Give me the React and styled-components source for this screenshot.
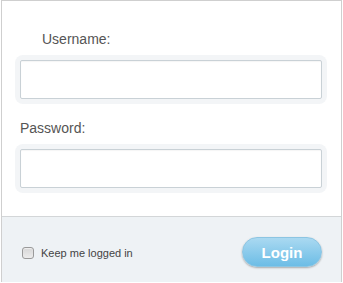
import styled, { createGlobalStyle } from "styled-components";

const GlobalStyle = createGlobalStyle`
  html, body {
    margin: 0;
    padding: 0;
    background: #fff;
  }
  body {
    font-family: "Liberation Sans", Arial, sans-serif;
  }
`;

const Card = styled.form`
  margin-left: 1px;
  width: 341px;
  box-sizing: border-box;
  border: 1px solid #cfcfcf;
  border-bottom: none;
  background: #fff;
`;

const Body = styled.div`
  padding: 30px 14px 23px 13px;
`;

const Label = styled.label`
  display: block;
  font-size: 14px;
  line-height: 16px;
  color: #555;
  padding-left: ${(p) => p.indent || 5}px;
  margin: ${(p) => p.top || 0}px 0 8px;
`;

const FieldWrap = styled.div`
  background: #f3f5f7;
  border-radius: 8px;
  padding: 5px;
  height: 49px;
  box-sizing: border-box;
  display: flex;
  align-items: stretch;
`;

const Input = styled.input`
  flex: 1;
  min-width: 0;
  margin: 0;
  box-sizing: border-box;
  border: 1px solid #c9d1d6;
  border-radius: 2px;
  background: #fff;
  box-shadow: inset 0 1px 1px rgba(0, 0, 0, 0.04);
  font-family: "Liberation Sans", Arial, sans-serif;
  font-size: 14px;
  padding: 0 8px;
  outline: none;
`;

const Footer = styled.div`
  border-top: 1px solid #d3d6d8;
  background: #eef2f5;
  height: 66px;
  box-sizing: border-box;
  padding: 20px 19px 0 20px;
  display: flex;
  align-items: flex-start;
  justify-content: space-between;
`;

const Remember = styled.label`
  display: flex;
  align-items: center;
  gap: 7px;
  margin-top: 10px;
  font-size: 11px;
  color: #444;
`;

const Check = styled.input`
  appearance: none;
  margin: 0;
  width: 12px;
  height: 12px;
  border: 1px solid #9a9a9a;
  border-radius: 3px;
  background: linear-gradient(#d6d6d6, #ececec);
  box-shadow: inset 0 1px 1px rgba(255, 255, 255, 0.6);
`;

const LoginButton = styled.button`
  width: 80px;
  height: 30px;
  border-radius: 15px;
  border: 1px solid #8cc5e2;
  background: linear-gradient(#aad9f1, #6cbde6);
  box-shadow: 0 1px 2px rgba(0, 0, 0, 0.3);
  color: #fff;
  font-family: "Liberation Sans", Arial, sans-serif;
  font-weight: bold;
  font-size: 15px;
  padding: 0;
  cursor: pointer;
`;

const App = () => {
  return (
    <>
      <GlobalStyle />
      <Card onSubmit={(e) => e.preventDefault()}>
        <Body>
          <Label indent={27}>Username:</Label>
          <FieldWrap>
            <Input type="text" />
          </FieldWrap>
          <Label top={16}>Password:</Label>
          <FieldWrap>
            <Input type="password" />
          </FieldWrap>
        </Body>
        <Footer>
          <Remember>
            <Check type="checkbox" />
            Keep me logged in
          </Remember>
          <LoginButton type="submit">Login</LoginButton>
        </Footer>
      </Card>
    </>
  );
};

export default App;
